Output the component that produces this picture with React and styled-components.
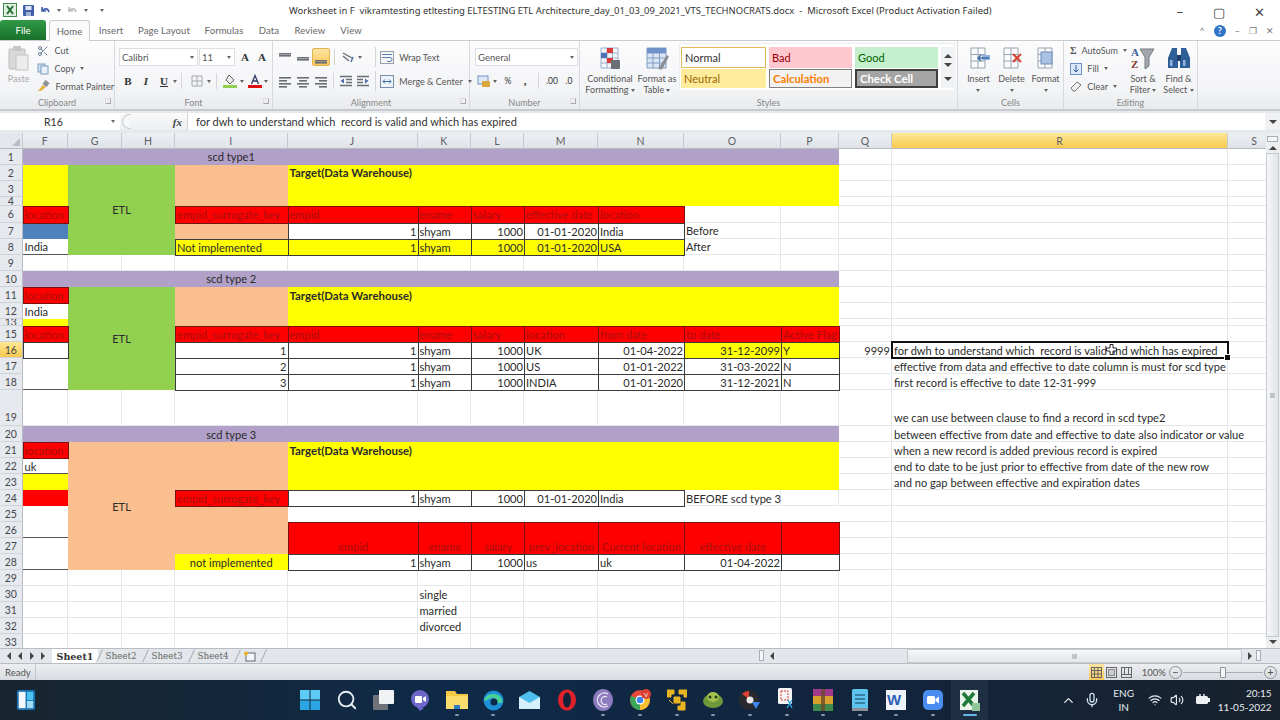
import React from "react";
import styled, { createGlobalStyle } from "styled-components";
import { Scissors, Search, ChevronUp, Mic, Wifi, Volume2 } from "lucide-react";

const FONT = `Lato, "Open Sans", "Liberation Sans", sans-serif`;

const GlobalStyle = createGlobalStyle`
  html, body { margin: 0; padding: 0; width: 1280px; height: 720px; overflow: hidden; background: #fff; }
  body { font-family: ${FONT}; color: #333; }
  * { box-sizing: border-box; }
`;

const Window = styled.div`
  width: 1280px;
  height: 720px;
  display: flex;
  flex-direction: column;
  overflow: hidden;
`;

/* title bar */
const TitleBar = styled.div`
  height: 20px;
  display: flex;
  align-items: center;
  background: #fff;
  padding-left: 3px;
`;
const Quick = styled.div`
  width: 286px;
  display: flex;
  align-items: center;
  gap: 6px;
`;
const TitleText = styled.div`
  font-family: "Noto Sans", sans-serif;
  font-size: 9.45px;
  color: #333;
  white-space: pre;
  width: 864px;
`;
const WinBtns = styled.div`
  display: flex;
  align-items: center;
  margin-left: 23px;
  padding-top: 3px;
  gap: 29px;
  font-size: 13px;
  color: #444;
`;

/* tabs */
const TabBar = styled.div`
  height: 21px;
  display: flex;
  align-items: flex-end;
  background: #fff;
  border-bottom: 1px solid #c9ccd0;
`;
const FileTab = styled.div`
  width: 46px;
  height: 20px;
  background: linear-gradient(#2f9a45, #1a6f2c);
  color: #fff;
  border-radius: 3px 3px 0 0;
  font-size: 9.5px;
  display: flex;
  align-items: center;
  justify-content: center;
  margin-right: 3px;
`;
const Tab = styled.div`
  height: ${(p) => (p.$on ? 21 : 19)}px;
  width: ${(p) => p.$w}px;
  font-size: 9.5px;
  letter-spacing: 0.1px;
  color: #666;
  display: flex;
  align-items: center;
  justify-content: center;
  background: ${(p) => (p.$on ? "#fbfbfb" : "transparent")};
  border: ${(p) => (p.$on ? "1px solid #c9ccd0" : "none")};
  border-bottom: none;
  border-radius: 3px 3px 0 0;
  margin-bottom: ${(p) => (p.$on ? -1 : 0)}px;
`;
const HelpBtns = styled.div`
  margin-left: auto;
  padding-right: 6px;
  height: 19px;
  display: flex;
  align-items: center;
  gap: 9px;
  color: #777;
  font-size: 9px;
`;
const HelpDot = styled.span`
  width: 12px;
  height: 12px;
  border-radius: 50%;
  background: #2f74c6;
  color: #fff;
  font-size: 9px;
  font-weight: 700;
  display: flex;
  align-items: center;
  justify-content: center;
`;

/* ribbon */
const Ribbon = styled.div`
  height: 70px;
  display: flex;
  background: linear-gradient(#fcfcfd, #f3f4f6 70%, #e9ebee);
  border-bottom: 2px solid #c6c9cd;
`;
const Group = styled.div`
  width: ${(p) => p.$w}px;
  border-right: 1px solid #d7d9dc;
  display: flex;
  flex-direction: column;
`;
const GroupBody = styled.div`
  height: 54px;
  display: flex;
  padding-left: ${(p) => p.$pl || 0}px;
`;
const GroupLabel = styled.div`
  flex: 1;
  font-size: 9px;
  color: #888;
  display: flex;
  align-items: center;
  justify-content: center;
  position: relative;
`;
const Launcher = styled.span`
  position: absolute;
  right: 3px;
  top: 3px;
  width: 6px;
  height: 6px;
  border: 1px solid #aaa;
  border-top-color: #ddd;
  border-left-color: #ddd;
`;
const PasteBox = styled.div`
  width: 38px;
  display: flex;
  flex-direction: column;
  align-items: center;
  padding-top: 4px;
  font-size: 9px;
  color: #aaa;
  gap: 2px;
`;
const SmallCol = styled.div`
  width: ${(p) => (p.$w ? p.$w + "px" : "auto")};
  display: flex;
  flex-direction: column;
  padding-top: 1px;
`;
const SmallRow = styled.div`
  height: 18px;
  display: flex;
  align-items: center;
  gap: 3px;
  font-size: 9px;
  color: #555;
  white-space: pre;
`;
const ToolRows = styled.div`
  display: flex;
  flex-direction: column;
  padding-top: 4px;
`;
const ToolRow = styled.div`
  height: 24px;
  display: flex;
  align-items: center;
`;
const Select = styled.div`
  width: ${(p) => p.$w}px;
  height: 18px;
  background: #fff;
  border: 1px solid #dcdee1;
  margin-right: ${(p) => p.$mr || 0}px;
  font-size: 9.5px;
  color: #555;
  display: flex;
  align-items: center;
  justify-content: space-between;
  padding: 0 3px 0 2px;
`;
const Caret = styled.span`
  display: inline-block;
  vertical-align: middle;
  width: 0;
  height: 0;
  border-left: 2px solid transparent;
  border-right: 2px solid transparent;
  border-top: 3px solid #666;
  flex: none;
  margin: 0 ${(p) => p.$m || 0}px;
`;
const Tool = styled.div`
  width: 18px;
  height: 18px;
  margin-left: ${(p) => p.$ml || 0}px;
  display: flex;
  align-items: center;
  justify-content: center;
  border-radius: 2px;
  font-size: ${(p) => (p.$plain ? 8.5 : 11)}px;
  font-family: ${(p) => (p.$plain ? FONT : `"Liberation Serif", serif`)};
  font-weight: ${(p) => (p.$plain ? 400 : 700)};
  font-style: ${(p) => (p.$it ? "italic" : "normal")};
  text-decoration: ${(p) => (p.$un ? "underline" : "none")};
  color: #333;
  background: ${(p) => (p.$on ? "linear-gradient(#fde6a3, #f9c75a)" : "transparent")};
  border: ${(p) => (p.$on ? "1px solid #e3b34c" : "none")};
`;
const VLine = styled.span`
  width: 1px;
  height: ${(p) => p.$h || 16}px;
  background: #d3d5d8;
  flex: none;
  margin: ${(p) => p.$m || "0 4px"};
`;
const BigBtn = styled.div`
  width: ${(p) => p.$w}px;
  display: flex;
  flex-direction: column;
  align-items: center;
  padding-top: 2px;
`;
const BigIcon = styled.div`
  height: 30px;
  display: flex;
  align-items: center;
`;
const BigLabel = styled.div`
  font-size: 9px;
  line-height: 11px;
  color: #555;
  text-align: center;
  white-space: pre;
`;
const SumSign = styled.b`
  font-family: "Liberation Serif", serif;
  font-size: 10px;
  width: 12px;
  text-align: center;
`;
const Gallery = styled.div`
  width: 276px;
  height: 48px;
  margin: 2px 0 0 0;
  background: #fff;
  display: grid;
  grid-template-columns: 85px 83px 83px 14px;
  grid-template-rows: 21px 19px;
  column-gap: 3px;
  row-gap: 1px;
  padding: 3px 1px;
  border: 1px solid #eceef0;
`;
const Style = styled.div`
  font-size: ${(p) => (p.$b ? 11.3 : 11)}px;
  font-weight: ${(p) => (p.$b ? 700 : 400)};
  color: ${(p) => p.$c};
  background: ${(p) => p.$bg};
  border: ${(p) => p.$bd || "none"};
  display: flex;
  align-items: center;
  padding-left: 3px;
`;
const GalleryArrows = styled.div`
  grid-column: 4;
  grid-row: 1 / 3;
  background: #f1f2f4;
  display: flex;
  flex-direction: column;
  align-items: center;
  justify-content: space-around;
`;

/* formula bar */
const FormulaWrap = styled.div`
  height: 22px;
  background: #e6e8eb;
  padding: 2px 0 3px;
  display: flex;
  align-items: stretch;
`;
const NameBox = styled.div`
  width: 120px;
  background: #fff;
  font-size: 10.5px;
  color: #333;
  display: flex;
  align-items: center;
  padding-left: 44px;
  justify-content: space-between;
  padding-right: 4px;
`;
const FxZone = styled.div`
  width: 68px;
  background: linear-gradient(#fafafa, #eceef0);
  display: flex;
  align-items: center;
  justify-content: space-between;
  padding: 0 5px 0 2px;
  font-family: "Liberation Serif", serif;
  font-style: italic;
  font-weight: 700;
  font-size: 11px;
  color: #444;
  border-right: 1px solid #cfd2d6;
`;
const FxCurve = styled.span`
  width: 9px;
  height: 15px;
  border: 1px solid #c9ccd1;
  border-right: none;
  border-radius: 8px 0 0 8px;
  background: #f6f7f8;
`;
const FormulaInput = styled.div`
  flex: 1;
  background: #fff;
  font-size: 11px;
  color: #333;
  display: flex;
  align-items: center;
  padding-left: 8px;
  white-space: pre;
`;
const FormulaEnd = styled.div`
  width: 15px;
  background: #f0f1f3;
  display: flex;
  align-items: center;
  justify-content: center;
`;

/* sheet */
const COLS = ["F", "G", "H", "I", "J", "K", "L", "M", "N", "O", "P", "Q", "R", "S"];
const COL_W = [45.5, 54, 53, 112.5, 130, 53.5, 53, 74, 86, 97, 58, 53, 336, 53];
const ROWS = [1, 2, 3, 4, 6, 7, 8, 9, 10, 11, 12, 13, 15, 16, 17, 18, 19, 20, 21, 22, 23, 24, 25, 26, 27, 28, 29, 30, 31, 32, 33];
const rowH = (r) => (r === 4 ? 9 : r === 6 ? 17 : r === 13 ? 7 : r === 19 ? 36 : 16);

const SheetRow = styled.div`
  height: 515px;
  display: flex;
`;
const Grid = styled.div`
  width: 1265.5px;
  height: 515px;
  overflow: hidden;
  flex: none;
  display: grid;
  grid-template-columns: 22.5px ${COL_W.map((w) => w + "px").join(" ")};
  grid-template-rows: 16px ${ROWS.map((r) => rowH(r) + "px").join(" ")};
  font-size: 11.1px;
  color: #2b2b2b;
`;
const ColHead = styled.div`
  grid-row: 1;
  grid-column: ${(p) => p.$i + 2};
  background: ${(p) => (p.$on ? "linear-gradient(#fde995, #f8c94f)" : "linear-gradient(#edf0f3, #dfe3e8)")};
  border-right: 1px solid #c6cad0;
  border-bottom: 1px solid #b8bcc2;
  font-size: 10.5px;
  color: #5d6066;
  display: flex;
  align-items: center;
  justify-content: center;
`;
const Corner = styled.div`
  grid-row: 1;
  grid-column: 1;
  background: #e4e7eb;
  border-right: 1px solid #c6cad0;
  border-bottom: 1px solid #b8bcc2;
  position: relative;
  &::after {
    content: "";
    position: absolute;
    right: 2px;
    bottom: 2px;
    border-left: 8px solid transparent;
    border-bottom: 8px solid #b9bdc3;
  }
`;
const RowHead = styled.div`
  grid-column: 1;
  grid-row: ${(p) => p.$i + 2};
  background: ${(p) => (p.$on ? "linear-gradient(#fde995, #f8c94f)" : "#e6e9ed")};
  border-right: 1px solid #b8bcc2;
  border-bottom: 1px solid #cfd2d7;
  font-size: 10.5px;
  color: #44474c;
  overflow: hidden;
  display: flex;
  align-items: ${(p) => (p.$tall ? "flex-end" : "center")};
  justify-content: center;
  line-height: 16px;
`;
const GridLine = styled.div`
  grid-column: ${(p) => p.$c};
  grid-row: ${(p) => p.$r};
  border-right: 1px solid #e6e7e9;
  border-bottom: 1px solid #e6e7e9;
`;
const Cell = styled.div`
  grid-column: ${(p) => p.$col};
  grid-row: ${(p) => p.$row};
  background: ${(p) => p.$fill || "transparent"};
  color: ${(p) => (p.$head ? "#a80f0f" : "#2b2b2b")};
  font-weight: ${(p) => (p.$bold ? 700 : 400)};
  font-size: ${(p) => (p.$bold ? "11.4px" : "inherit")};
  display: flex;
  align-items: ${(p) => p.$v || "center"};
  justify-content: ${(p) => (p.$a === "r" ? "flex-end" : p.$a === "c" ? "center" : "flex-start")};
  padding: ${(p) => (p.$nudge ? 1 : 0)}px 2px 0 2px;
  line-height: 16px;
  white-space: pre;
  position: relative;
  ${(p) =>
    p.$box &&
    `margin: 0 -1px -1px 0; outline: 1px solid ${p.$head ? "#7a1010" : "#3a3a3a"}; outline-offset: -1px;`}
  ${(p) => p.$under && `box-shadow: inset 0 -1px 0 #555;`}
`;
const Selected = styled(Cell)`
  outline: 2px solid #111;
  outline-offset: -1px;
  z-index: 2;
  &::after {
    content: "";
    position: absolute;
    right: -3px;
    bottom: -3px;
    width: 5px;
    height: 5px;
    background: #111;
    border: 1px solid #fff;
  }
`;
const Pointer = styled.svg`
  position: absolute;
  left: 214px;
  top: 2px;
`;
const VScroll = styled.div`
  flex: 1;
  background: #eceef0;
  display: flex;
  flex-direction: column;
  align-items: center;
`;
const SplitBox = styled.div`
  width: 11px;
  height: 6px;
  margin-top: 3px;
  background: #f4f5f6;
  border: 1px solid #a9adb3;
`;
const ScrollThumb = styled.div`
  width: 13px;
  flex: 1;
  margin: 3px 0;
  background: linear-gradient(90deg, #f6f7f8, #e2e4e8);
  border: 1px solid #c6c9ce;
  display: flex;
  align-items: center;
  justify-content: center;
`;
const Grip = styled.span`
  width: 5px;
  height: 5px;
  background: #c0c3c8;
`;
const Arrow = styled.span`
  width: 0;
  height: 0;
  flex: none;
  ${(p) => p.$d === "u" && "border-left:4px solid transparent;border-right:4px solid transparent;border-bottom:4px solid #444;margin-top:4px;"}
  ${(p) => p.$d === "d" && `border-left:4px solid transparent;border-right:4px solid transparent;border-top:4px solid #444;margin-bottom:${p.$flush ? 0 : 4}px;`}
  ${(p) => p.$d === "l" && "border-top:4px solid transparent;border-bottom:4px solid transparent;border-right:4px solid #444;"}
  ${(p) => p.$d === "r" && "border-top:4px solid transparent;border-bottom:4px solid transparent;border-left:4px solid #444;"}
`;

/* sheet tabs */
const TabsRow = styled.div`
  height: 15px;
  display: flex;
  align-items: stretch;
  background: #e3e6ea;
  border-top: 1px solid #b9bdc3;
`;
const SheetNav = styled.div`
  width: 52px;
  display: flex;
  align-items: center;
  justify-content: space-around;
  padding: 0 3px;
`;
const SheetTab = styled.div`
  width: ${(p) => p.$w}px;
  font-family: "DejaVu Serif", serif;
  font-size: ${(p) => (p.$on ? 9.5 : 8.8)}px;
  font-weight: ${(p) => (p.$on ? 700 : 400)};
  color: ${(p) => (p.$on ? "#333" : "#666")};
  background: ${(p) => (p.$on ? "#fff" : "transparent")};
  display: flex;
  align-items: center;
  justify-content: center;
  position: relative;
  &::after {
    content: "";
    position: absolute;
    right: -2px;
    top: 0;
    bottom: 0;
    width: 1px;
    background: #a5a9af;
    transform: rotate(25deg);
  }
`;
const SplitH = styled.span`
  width: 5px;
  height: 11px;
  margin: 1px 0 0 ${(p) => p.$ml}px;
  background: #f5f6f7;
  border: 1px solid #a9adb3;
  flex: none;
`;
const HThumb = styled.div`
  width: 335px;
  margin: 0 3px 0 ${(p) => p.$ml}px;
  background: linear-gradient(#f6f7f8, #e4e6ea);
  border: 1px solid #c6c9ce;
  display: flex;
  align-items: center;
  justify-content: center;
`;
const ArrowSlot = styled.div`
  display: flex;
  align-items: center;
  margin-left: ${(p) => p.$ml || 0}px;
`;

/* status bar */
const StatusBar = styled.div`
  height: 17px;
  display: flex;
  align-items: center;
  background: linear-gradient(#eceef1, #d8dbe0);
  border-top: 1px solid #b9bdc3;
  font-size: 9.5px;
  color: #555;
`;
const Ready = styled.div`
  width: 36px;
  height: 100%;
  padding-left: 5px;
  display: flex;
  align-items: center;
  border-right: 1px solid #c2c5ca;
`;
const StatusRight = styled.div`
  margin-left: auto;
  height: 100%;
  padding-right: 3px;
  display: flex;
  align-items: center;
`;
const ViewBtn = styled.div`
  width: 15px;
  height: 100%;
  display: flex;
  align-items: center;
  justify-content: center;
  background: ${(p) => (p.$on ? "linear-gradient(#fde6a3, #f9c75a)" : "transparent")};
`;
const ZoomPct = styled.span`
  margin: 0 3px 0 8px;
`;
const ZoomDot = styled.span`
  width: 13px;
  height: 13px;
  border: 1px solid #8d9197;
  border-radius: 50%;
  font-size: 11px;
  line-height: 10px;
  display: flex;
  align-items: center;
  justify-content: center;
  color: #555;
  flex: none;
`;
const ZoomTrack = styled.div`
  width: 80px;
  height: 1px;
  background: #a9adb3;
  margin: 0 1px;
  display: flex;
  align-items: center;
  justify-content: center;
`;
const ZoomKnob = styled.span`
  width: 6px;
  height: 11px;
  background: #f5f6f7;
  border: 1px solid #8d9197;
  border-radius: 1px;
`;

/* taskbar */
const Taskbar = styled.div`
  height: 40px;
  display: flex;
  align-items: center;
  background: linear-gradient(90deg, #18252f, #0f2a48 35%, #12243c 70%, #18222d);
  color: #e8ecf0;
`;
const TaskLeft = styled.div`
  width: 291.67px;
  flex: none;
  padding-left: 16px;
  display: flex;
  align-items: center;
`;
const TaskSlot = styled.div`
  width: 36.67px;
  flex: none;
  height: 40px;
  display: flex;
  align-items: center;
  justify-content: center;
  position: relative;
  background: ${(p) => (p.$active ? "rgba(255,255,255,0.05)" : "transparent")};
  ${(p) =>
    p.$run &&
    `&::after {
      content: "";
      position: absolute;
      bottom: 4px;
      left: 50%;
      width: ${p.$active ? 14 : 4}px;
      margin-left: ${p.$active ? -7 : -2}px;
      height: 2px;
      border-radius: 1px;
      background: ${p.$active ? "#63b8ee" : "#8a94a0"};
    }`}
`;
const Tray = styled.div`
  margin-left: 73px;
  display: flex;
  align-items: center;
  height: 40px;
  flex: none;
`;
const TrayIcon = styled.span`
  display: flex;
  margin-right: ${(p) => p.$mr || 0}px;
`;
const Lang = styled.div`
  width: 38px;
  margin: 0 5px 0 4.5px;
  font-size: 10px;
  line-height: 14px;
  text-align: center;
`;
const Clock = styled.div`
  width: 62px;
  font-size: 10px;
  line-height: 14px;
  text-align: right;
  white-space: nowrap;
`;

const Lines = ({ kind }) => {
  const rows = {
    top: [[2, 12], [4, 12]],
    mid: [[6, 12], [8, 12]],
    bot: [[9, 12], [11, 12]],
    left: [[2, 12], [5, 8], [8, 12], [11, 8]],
    center: [[2, 12], [5, 8], [8, 12], [11, 8]],
    right: [[2, 12], [5, 8], [8, 12], [11, 8]],
  }[kind];
  return (
    <svg width="14" height="13" viewBox="0 0 14 13">
      {rows.map(([y, w], i) => (
        <rect key={i} x={kind === "right" ? 13 - w : kind === "center" ? 7 - w / 2 : 1} y={y} width={w} height="1.6" fill="#6b6f75" />
      ))}
    </svg>
  );
};

const XlLogo = () => (
  <svg width="14" height="14" viewBox="0 0 14 14">
    <rect x="0.5" y="0.5" width="13" height="13" fill="#dfeee0" stroke="#3f8a4c" />
    <path d="M4 3l6 8M10 3l-6 8" stroke="#1f6f30" strokeWidth="2" />
  </svg>
);
const Save = () => (
  <svg width="11" height="11" viewBox="0 0 11 11">
    <rect width="11" height="11" rx="1" fill="#3f5fa8" />
    <rect x="2.5" y="1" width="6" height="4" fill="#dfe6f2" />
    <rect x="3" y="7" width="5" height="4" fill="#9fb1d4" />
  </svg>
);
const Undo = ({ c = "#3f5fa8" }) => (
  <svg width="11" height="11" viewBox="0 0 11 11">
    <path d="M2 2v4h4M2 6c2-3 6-3 7 1" fill="none" stroke={c} strokeWidth="1.6" />
  </svg>
);
const Paste = () => (
  <svg width="22" height="26" viewBox="0 0 22 26">
    <rect x="1" y="4" width="16" height="20" rx="1" fill="#d8d8d8" stroke="#bdbdbd" />
    <rect x="5" y="1" width="8" height="5" rx="1" fill="#c6c6c6" />
    <rect x="8" y="10" width="12" height="15" fill="#ececec" stroke="#c4c4c4" />
  </svg>
);
const CopyIc = () => (
  <svg width="12" height="12" viewBox="0 0 12 12">
    <rect x="1" y="1" width="7" height="8" fill="#cfe0f2" stroke="#7d9cc0" />
    <rect x="4" y="3" width="7" height="8" fill="#e9f1fa" stroke="#7d9cc0" />
  </svg>
);
const Painter = () => (
  <svg width="13" height="12" viewBox="0 0 13 12">
    <path d="M1 11l5-6 3 2-5 4z" fill="#e2b23c" />
    <rect x="6.5" y="1" width="5" height="5" transform="rotate(35 9 3.5)" fill="#8b8f96" />
  </svg>
);
const Borders = () => (
  <svg width="12" height="12" viewBox="0 0 12 12">
    <path d="M1 1h10v10H1zM6 1v10M1 6h10" fill="none" stroke="#a5a8ad" />
  </svg>
);
const FillColor = () => (
  <svg width="14" height="14" viewBox="0 0 14 14">
    <path d="M6 1l5 5-4 4-4-4z" fill="#e9eaec" stroke="#666" />
    <rect x="0" y="11" width="14" height="3" fill="#92d050" />
  </svg>
);
const FontColor = () => (
  <svg width="14" height="14" viewBox="0 0 14 14">
    <path d="M3.5 10L7 1.500 10.500 10M5 7h4" fill="none" stroke="#333a66" strokeWidth="1.3" />
    <rect x="0" y="11" width="14" height="3" fill="#e01010" />
  </svg>
);
const Orient = () => (
  <svg width="14" height="13" viewBox="0 0 14 13">
    <path d="M2 2l9 5M2 5l6 5" stroke="#6b6f75" strokeWidth="1.4" />
    <path d="M10 11l2-5" stroke="#4f6fa8" strokeWidth="1.4" />
  </svg>
);
const Accounting = () => (
  <svg width="14" height="13" viewBox="0 0 14 13">
    <rect x="1" y="1" width="10" height="8" fill="#dfe9f5" stroke="#6f93c9" />
    <rect x="5" y="6" width="8" height="6" rx="1" fill="#d9a93a" />
  </svg>
);
const Indent = ({ flip }) => (
  <svg width="14" height="12" viewBox="0 0 14 12">
    <g transform={flip ? "translate(14,0) scale(-1,1)" : undefined}>
      <path d="M1 1.500h12M7 4.500h6M7 7.500h6M1 10.500h12" stroke="#6b6f75" strokeWidth="1.3" />
      <path d="M5 3.500L1.500 6 5 8.500z" fill="#4f6fa8" />
    </g>
  </svg>
);
const WrapIc = () => (
  <svg width="14" height="13" viewBox="0 0 14 13">
    <rect x="0.5" y="0.5" width="13" height="12" fill="#f5f5f5" stroke="#9a9da2" />
    <path d="M2 3.500h10M2 6.500h8a2 2 0 010 4H7" fill="none" stroke="#5a7fb0" />
  </svg>
);
const MergeIc = () => (
  <svg width="14" height="13" viewBox="0 0 14 13">
    <rect x="0.5" y="0.5" width="13" height="12" fill="#eef3f9" stroke="#7b8ea8" />
    <path d="M3 6.500h8M3 6.500l2-2M3 6.500l2 2M11 6.500l-2-2M11 6.500l-2 2" stroke="#3f6ea8" fill="none" />
  </svg>
);
const Cond = () => (
  <svg width="26" height="26" viewBox="0 0 26 26">
    <path d="M4 3h17v20H4zM4 8h17M4 13h17M4 18h17M10 3v20M15.500 3v20" fill="#f4f6f9" stroke="#9ab0cc" />
    <rect x="10" y="3" width="6" height="5" fill="#d83a3a" />
    <rect x="4" y="8" width="6" height="5" fill="#4d72b8" />
    <rect x="10" y="13" width="6" height="5" fill="#d83a3a" />
    <rect x="14" y="15" width="9" height="9" rx="1" fill="#6b6f75" />
  </svg>
);
const TableIc = () => (
  <svg width="26" height="26" viewBox="0 0 26 26">
    <path d="M3 3h19v20H3zM3 8h19M3 13h19M3 18h19M9 3v20M15.500 3v20" fill="#dbe6f4" stroke="#7f9cc4" />
    <rect x="3" y="3" width="19" height="5" fill="#6f93c9" />
    <path d="M14 24l9-14 2 1.500-7 13z" fill="#8a8d92" />
  </svg>
);
const CellsIc = ({ kind }) => (
  <svg width="24" height="26" viewBox="0 0 24 26">
    <path d="M4 3h14v20H4zM4 9.500h14M4 16h14M11 3v20" fill="#fafbfc" stroke="#9aa3ae" />
    {kind === "insert" && <rect x="15" y="10" width="8" height="5" fill="#8fb2de" />}
    {kind === "insert" && <path d="M11 13h11M14 10l-3 3 3 3" stroke="#3f6ea8" fill="none" strokeWidth="1.500" />}
    {kind === "delete" && <path d="M13 9l8 8M21 9l-8 8" stroke="#d8412f" strokeWidth="2" />}
    {kind === "format" && <rect x="7" y="7" width="11" height="12" fill="#a9c3e4" stroke="#6b8bb8" />}
  </svg>
);
const SortIc = () => (
  <svg width="28" height="26" viewBox="0 0 28 26">
    <text x="2" y="11" fontSize="11" fontWeight="700" fontFamily="Liberation Serif" fill="#3a5f9a">A</text>
    <text x="2" y="23" fontSize="11" fontWeight="700" fontFamily="Liberation Serif" fill="#8a3a2a">Z</text>
    <path d="M11 4h14l-5 8v9l-4 3V12z" fill="#a3a7ad" stroke="#777b82" />
  </svg>
);
const Binoc = () => (
  <svg width="26" height="26" viewBox="0 0 26 26">
    <path d="M6 3h5v6l1 3v11H2V13zM15 3h5l4 10v10H14V12l1-3z" fill="#2f5f96" />
    <rect x="11" y="10" width="4" height="6" fill="#1f3f6a" />
    <rect x="4" y="15" width="2.500" height="6" fill="#8fb2de" />
    <rect x="17" y="15" width="2.500" height="6" fill="#8fb2de" />
  </svg>
);
const Eraser = () => (
  <svg width="12" height="12" viewBox="0 0 12 12">
    <path d="M1 8l6-6 4 3-6 6H3z" fill="#f0f0f0" stroke="#777" />
  </svg>
);
const FillDown = () => (
  <svg width="12" height="12" viewBox="0 0 12 12">
    <rect x="0.5" y="0.5" width="11" height="11" fill="#dbe8f7" stroke="#6f93c9" />
    <path d="M6 2v7M3.500 6.500L6 9l2.500-2.500" stroke="#2f5f96" fill="none" />
  </svg>
);
const ViewIc = ({ kind }) => (
  <svg width="11" height="11" viewBox="0 0 11 11">
    <rect x="0.5" y="0.5" width="10" height="10" fill="none" stroke="#666" />
    {kind === "n" && <path d="M0.500 3.500h10M0.500 7h10M3.500 0.500v10M7 0.500v10" stroke="#666" />}
    {kind === "p" && <rect x="2.500" y="2.500" width="6" height="6" fill="#ccc" stroke="#888" />}
    {kind === "b" && <path d="M3.500 0.500v7h4v-7M0.500 7.500h10" fill="none" stroke="#666" />}
  </svg>
);

const Widgets = () => (
  <svg width="20" height="20" viewBox="0 0 20 22">
    <rect width="20" height="22" rx="2" fill="#1a6fb0" />
    <rect x="2" y="2" width="7.500" height="18" fill="#f2f8fd" />
    <rect x="11" y="2" width="7" height="9" fill="#4cc2f1" />
    <rect x="11" y="12" width="7" height="8" fill="#9fdcf7" />
  </svg>
);
const Win11 = () => (
  <svg width="20" height="20" viewBox="0 0 20 20">
    <rect width="9.500" height="9.500" fill="#5ccbf5" />
    <rect x="10.500" width="9.500" height="9.500" fill="#5ccbf5" />
    <rect y="10.500" width="9.500" height="9.500" fill="#2ba6e2" />
    <rect x="10.500" y="10.500" width="9.500" height="9.500" fill="#2ba6e2" />
  </svg>
);
const TaskView = () => (
  <svg width="21" height="20" viewBox="0 0 21 20">
    <rect y="5" width="15" height="15" rx="1" fill="#6d7378" />
    <rect x="6" width="15" height="14" rx="1" fill="#f1f2f3" />
  </svg>
);
const Chat = () => (
  <svg width="20" height="22" viewBox="0 0 20 22">
    <circle cx="10" cy="10" r="9" fill="#6d67c9" />
    <path d="M6 17l8 2-4 3z" fill="#6d67c9" />
    <rect x="5" y="7" width="7" height="7" rx="1" fill="#fff" />
    <path d="M13 9l3-2v6l-3-2z" fill="#fff" />
  </svg>
);
const Folder = () => (
  <svg width="22" height="20" viewBox="0 0 22 20">
    <path d="M0 1h9l2 3h11v15H0z" fill="#f6c944" />
    <rect y="6" width="22" height="13" fill="#fbdc6c" />
    <rect x="8" y="15" width="6" height="4" fill="#2f7bc4" />
  </svg>
);
const Edge = () => (
  <svg width="21" height="21" viewBox="0 0 21 21">
    <circle cx="10.500" cy="10.500" r="10" fill="#1c8fd6" />
    <path d="M1 11C2 5 9 2 15 5c4 2 5 6 4 8h-7c2-3-1-6-4-5-3 1-5 3-7 3z" fill="#49d09a" />
    <circle cx="11" cy="12" r="3.500" fill="#0f2a48" />
  </svg>
);
const Mail = () => (
  <svg width="21" height="18" viewBox="0 0 21 18">
    <path d="M0 6L10.500 0 21 6v12H0z" fill="#4fc0ee" />
    <path d="M0 6l10.500 6L21 6v12H0z" fill="#e6f6fd" opacity="0.9" />
  </svg>
);
const Opera = () => (
  <svg width="20" height="22" viewBox="0 0 20 22">
    <ellipse cx="10" cy="11" rx="9" ry="10.500" fill="#e0202a" />
    <ellipse cx="10" cy="11" rx="4" ry="7.500" fill="#12243c" />
  </svg>
);
const Tor = () => (
  <svg width="20" height="22" viewBox="0 0 20 22">
    <ellipse cx="10" cy="11" rx="10" ry="11" fill="#8d7cc0" />
    <path d="M15 5a7 7 0 100 12M14 8a4 4 0 100 7" fill="none" stroke="#e8e4f4" strokeWidth="1.300" />
  </svg>
);
const Chrome = () => (
  <svg width="22" height="22" viewBox="0 0 22 22">
    <circle cx="11" cy="11" r="10" fill="#e6493a" />
    <path d="M2 7a10 10 0 009 14l5-9z" fill="#3aa757" />
    <path d="M11 21a10 10 0 009-14h-9z" fill="#f6c02f" />
    <circle cx="11" cy="11" r="4.500" fill="#fff" />
    <circle cx="11" cy="11" r="3.300" fill="#3f86ee" />
    <circle cx="17" cy="5" r="5" fill="#d8412f" />
    <text x="15" y="7.500" fontSize="6" fill="#fff">V</text>
  </svg>
);
const Yellow = () => (
  <svg width="20" height="22" viewBox="0 0 20 22">
    <path d="M0 1h7v4H4v3H0zM12 1h8v7h-3V5h-5zM7 8h6v6H7zM14 13h4v8h-7v-4h3zM2 11l4 4" fill="#e9b422" stroke="#e9b422" />
  </svg>
);
const GreenApp = () => (
  <svg width="22" height="20" viewBox="0 0 22 20">
    <ellipse cx="11" cy="11" rx="10" ry="7" fill="#6f9a3c" />
    <ellipse cx="11" cy="7" rx="6" ry="5" fill="#a5c24e" />
    <circle cx="8" cy="7" r="1.500" fill="#23421a" />
    <circle cx="14" cy="7" r="1.500" fill="#23421a" />
  </svg>
);
const Disc = () => (
  <svg width="24" height="24" viewBox="0 0 24 24">
    <circle cx="11" cy="12" r="10" fill="#2a2a2e" />
    <path d="M4 6a9 9 0 017-3v8z" fill="#d8412f" />
    <circle cx="12" cy="12" r="3.500" fill="#e8e8e8" />
    <path d="M14 14h8l-4 7z" fill="#3f86ee" />
  </svg>
);
const Snip = () => (
  <svg width="22" height="24" viewBox="0 0 22 24">
    <rect x="2" y="0" width="14" height="16" rx="1.500" fill="#f6f6f8" />
    <rect x="5" y="3" width="7" height="9" fill="none" stroke="#d8412f" strokeDasharray="2 1" />
    <path d="M16 12l-5 8M12 12l4 8" stroke="#2ba6e2" strokeWidth="1.300" />
  </svg>
);
const Rar = () => (
  <svg width="20" height="22" viewBox="0 0 20 22">
    <rect width="20" height="7" fill="#a23a8c" />
    <rect y="7" width="20" height="8" fill="#d8a02c" />
    <rect y="15" width="20" height="7" fill="#3f8a4c" />
    <rect x="8" width="4" height="22" fill="#6d4a2a" opacity="0.8" />
  </svg>
);
const Notepad = () => (
  <svg width="16" height="22" viewBox="0 0 16 22">
    <rect width="16" height="22" rx="1.500" fill="#5cc4ee" />
    <path d="M3 6h10M3 10h10M3 14h10" stroke="#0f3a58" strokeWidth="1.200" />
    <rect y="19" width="16" height="3" fill="#8b8f96" />
  </svg>
);
const Word = () => (
  <svg width="20" height="20" viewBox="0 0 20 20">
    <rect width="20" height="20" fill="#eef3fa" />
    <text x="1" y="15" fontSize="15" fontWeight="700" fontFamily="Liberation Sans" fill="#2b5fb4">W</text>
  </svg>
);
const ZoomApp = () => (
  <svg width="20" height="20" viewBox="0 0 20 20">
    <rect width="20" height="20" rx="5" fill="#4a8cf0" />
    <rect x="4" y="6" width="8" height="8" rx="1.500" fill="#fff" />
    <path d="M12.500 9l3.500-2.500v7L12.500 11z" fill="#fff" />
  </svg>
);
const ExcelApp = () => (
  <svg width="20" height="21" viewBox="0 0 20 21">
    <rect width="18" height="20" fill="#e9f3ea" />
    <path d="M3 3l11 13M14 3L3 16" stroke="#1f7a3a" strokeWidth="3.500" />
    <rect x="12" y="13" width="8" height="8" fill="#8fc79a" />
  </svg>
);
const Battery = () => (
  <svg width="14" height="12" viewBox="0 0 14 12">
    <rect x="0" y="2" width="12" height="8" rx="1.500" fill="#eef0f2" />
    <rect x="12" y="4" width="2" height="4" fill="#eef0f2" />
    <path d="M4 0v4M8 0v4" stroke="#eef0f2" strokeWidth="1.500" />
  </svg>
);

const place = (at) => {
  const [a, b = a] = at.split(":");
  const parse = (s) => [COLS.indexOf(s[0]) + 2, ROWS.indexOf(Number(s.slice(1))) + 2];
  const [c1, r1] = parse(a);
  const [c2, r2] = parse(b);
  return { $col: `${c1} / ${c2 + 1}`, $row: `${r1} / ${r2 + 1}`, $nudge: Number(a.slice(1)) >= 11 };
};

const PURPLE = "#b1a0c7";
const YEL = "#ffff00";
const RED = "#ff0000";
const GREEN = "#92d050";
const PEACH = "#fabf8f";
const BLUE = "#4f81bd";
const WHITE = "#fff";

const redRow = (row, items) =>
  items.map(([col, text]) => ({ at: `${col}${row}`, fill: RED, text, head: true, box: true }));

const dataRow = (row, cols, fill = WHITE) =>
  cols.map(([col, text, a]) => ({ at: `${col}${row}`, fill, text, a, box: true }));

const redTall = (col, text) => ({ at: `${col}26:${col}27`, fill: RED, text, head: true, box: true, a: "c", v: "flex-end" });

const CELLS = [
  // scd type 1
  { at: "F1:P1", fill: PURPLE },
  { at: "I1", text: "scd type1", a: "c" },
  { at: "F2:F4", fill: YEL },
  { at: "G2:H8", fill: GREEN, text: "ETL", a: "c" },
  { at: "I2:I4", fill: PEACH },
  { at: "J2:P4", fill: YEL },
  { at: "J2", text: "Target(Data Warehouse)", bold: true },
  { at: "F6", fill: RED, text: "location", head: true, box: true },
  ...redRow(6, [["I", "empid_surrogate_key"], ["J", "empid"], ["K", "ename"], ["L", "salary"], ["M", "effective date"], ["N", "location"]]),
  { at: "F7", fill: BLUE },
  { at: "I7", fill: PEACH },
  ...dataRow(7, [["J", "1", "r"], ["K", "shyam"], ["L", "1000", "r"], ["M", "01-01-2020", "r"], ["N", "India"]]),
  { at: "O7", text: "Before" },
  { at: "F8", fill: WHITE, text: "India", under: true },
  ...dataRow(8, [["I", "Not implemented"], ["J", "1", "r"], ["K", "shyam"], ["L", "1000", "r"], ["M", "01-01-2020", "r"], ["N", "USA"]], YEL),
  { at: "O8", text: "After" },
  // scd type 2
  { at: "F10:P10", fill: PURPLE },
  { at: "I10", text: "scd type 2", a: "c" },
  { at: "F11", fill: RED, text: "location", head: true, box: true },
  { at: "G11:H18", fill: GREEN, text: "ETL", a: "c" },
  { at: "I11:I13", fill: PEACH },
  { at: "J11:P13", fill: YEL },
  { at: "J11", text: "Target(Data Warehouse)", bold: true },
  { at: "F12", fill: WHITE, text: "India" },
  { at: "F13", fill: YEL },
  { at: "F15", fill: RED, text: "location", head: true, box: true },
  ...redRow(15, [["I", "empid_surrogate_key"], ["J", "empid"], ["K", "ename"], ["L", "salary"], ["M", "location"], ["N", "from date"], ["O", "to date"], ["P", "Active Flag"]]),
  { at: "F16", fill: WHITE, box: true },
  { at: "F17:F18", fill: WHITE, under: true },
  ...dataRow(16, [["I", "1", "r"], ["J", "1", "r"], ["K", "shyam"], ["L", "1000", "r"], ["M", "UK"], ["N", "01-04-2022", "r"]]),
  ...dataRow(16, [["O", "31-12-2099", "r"], ["P", "Y"]], YEL),
  { at: "Q16", text: "9999", a: "r" },
  ...dataRow(17, [["I", "2", "r"], ["J", "1", "r"], ["K", "shyam"], ["L", "1000", "r"], ["M", "US"], ["N", "01-01-2022", "r"], ["O", "31-03-2022", "r"], ["P", "N"]]),
  ...dataRow(18, [["I", "3", "r"], ["J", "1", "r"], ["K", "shyam"], ["L", "1000", "r"], ["M", "INDIA"], ["N", "01-01-2020", "r"], ["O", "31-12-2021", "r"], ["P", "N"]]),
  // scd type 3
  { at: "F20:P20", fill: PURPLE },
  { at: "I20", text: "scd type 3", a: "c" },
  { at: "F21", fill: RED, text: "location", head: true, box: true },
  { at: "G21:H28", fill: PEACH, text: "ETL", a: "c" },
  { at: "I21:I23", fill: PEACH },
  { at: "I25:I27", fill: PEACH },
  { at: "J21:P23", fill: YEL },
  { at: "J21", text: "Target(Data Warehouse)", bold: true },
  { at: "F22", fill: WHITE, text: "uk", under: true },
  { at: "F23", fill: YEL },
  { at: "F24", fill: RED },
  { at: "I24", fill: RED, text: "empid_surrogate_key", head: true, box: true },
  ...dataRow(24, [["J", "1", "r"], ["K", "shyam"], ["L", "1000", "r"], ["M", "01-01-2020", "r"], ["N", "India"]]),
  { at: "O24", text: "BEFORE scd type 3" },
  { at: "F25:F26", fill: WHITE, under: true },
  { at: "F27:F28", fill: WHITE, under: true },
  { at: "J25:P25", fill: WHITE },
  redTall("J", "empid"),
  redTall("K", "ename"),
  redTall("L", "salary"),
  redTall("M", "prev_location"),
  redTall("N", "Current location"),
  redTall("O", "effective date"),
  redTall("P", ""),
  { at: "I28", fill: YEL, text: "not implemented", a: "c" },
  ...dataRow(28, [["J", "1", "r"], ["K", "shyam"], ["L", "1000", "r"], ["M", "us"], ["N", "uk"], ["O", "01-04-2022", "r"], ["P", ""]]),
  { at: "K30", text: "single" },
  { at: "K31", text: "married" },
  { at: "K32", text: "divorced" },
  // notes
  { at: "R17", text: "effective from data and effective to date column is must for scd type" },
  { at: "R18", text: "first record is effective to date 12-31-999" },
  { at: "R19", text: "we can use between clause to find a record in scd type2", v: "flex-end" },
  { at: "R20", text: "between effective from date and effective to date also indicator or value" },
  { at: "R21", text: "when a new record is added previous record is expired" },
  { at: "R22", text: "end to date to be just prior to effective from date of the new row" },
  { at: "R23", text: "and no gap between effective and expiration dates" },
];

// boxed cells go last so plain fills don't paint over their borders
const ORDERED = [...CELLS].sort((a, b) => (a.box ? 1 : 0) - (b.box ? 1 : 0));

const TAB_W = [["Insert", 42], ["Page Layout", 64], ["Formulas", 56], ["Data", 34], ["Review", 48], ["View", 34]];

export default function App() {
  return (
    <>
      <GlobalStyle />
      <Window>
        <TitleBar>
          <Quick>
            <XlLogo />
            <Save />
            <Undo />
            <Caret />
            <Undo c="#b9bcc2" />
            <Caret />
            <Caret $m={6} />
          </Quick>
          <TitleText>{"Worksheet in F  vikramtesting etltesting ELTESTING ETL Architecture_day_01_03_09_2021_VTS_TECHNOCRATS.docx  -  Microsoft Excel (Product Activation Failed)"}</TitleText>
          <WinBtns>
            <span>−</span>
            <span>▢</span>
            <span>✕</span>
          </WinBtns>
        </TitleBar>

        <TabBar>
          <FileTab>File</FileTab>
          <Tab $on $w={41}>Home</Tab>
          {TAB_W.map(([t, w]) => (
            <Tab key={t} $w={w}>{t}</Tab>
          ))}
          <HelpBtns>
            <span>^</span>
            <HelpDot>?</HelpDot>
            <span>–</span>
            <span>❐</span>
            <span>✕</span>
          </HelpBtns>
        </TabBar>

        <Ribbon>
          <Group $w={115}>
            <GroupBody>
              <PasteBox>
                <Paste />
                <span>Paste</span>
              </PasteBox>
              <SmallCol>
                <SmallRow><Scissors size={12} color="#6d7f98" /> Cut</SmallRow>
                <SmallRow><CopyIc /> Copy <Caret /></SmallRow>
                <SmallRow><Painter /> Format Painter</SmallRow>
              </SmallCol>
            </GroupBody>
            <GroupLabel>Clipboard<Launcher /></GroupLabel>
          </Group>

          <Group $w={158}>
            <GroupBody $pl={4}>
              <ToolRows>
                <ToolRow>
                  <Select $w={79} $mr={1}>Calibri <Caret /></Select>
                  <Select $w={36}>11 <Caret /></Select>
                  <Tool $ml={1}>A</Tool>
                  <Tool $ml={-1}>A</Tool>
                </ToolRow>
                <ToolRow>
                  <Tool>B</Tool>
                  <Tool $it>I</Tool>
                  <Tool $un>U</Tool>
                  <Caret />
                  <VLine />
                  <Tool $ml={2}><Borders /></Tool>
                  <Caret $m={1} />
                  <VLine />
                  <Tool><FillColor /></Tool>
                  <Caret $m={1} />
                  <Tool $ml={1}><FontColor /></Tool>
                  <Caret />
                </ToolRow>
              </ToolRows>
            </GroupBody>
            <GroupLabel>Font<Launcher /></GroupLabel>
          </Group>

          <Group $w={197}>
            <GroupBody $pl={3}>
              <ToolRows>
                <ToolRow>
                  <Tool><Lines kind="top" /></Tool>
                  <Tool><Lines kind="mid" /></Tool>
                  <Tool $on><Lines kind="bot" /></Tool>
                  <VLine $m="0 4px" />
                  <Tool><Orient /></Tool>
                  <Caret $m={1} />
                  <VLine $h={20} $m="0 4px 0 12px" />
                  <SmallRow><WrapIc /> Wrap Text</SmallRow>
                </ToolRow>
                <ToolRow>
                  <Tool><Lines kind="left" /></Tool>
                  <Tool><Lines kind="center" /></Tool>
                  <Tool><Lines kind="right" /></Tool>
                  <VLine $m="0 3px" />
                  <Tool><Indent /></Tool>
                  <Tool $ml={-1}><Indent flip /></Tool>
                  <VLine $h={20} $m="0 4px 0 3px" />
                  <SmallRow><MergeIc /> Merge &amp; Center <Caret /></SmallRow>
                </ToolRow>
              </ToolRows>
            </GroupBody>
            <GroupLabel>Alignment<Launcher /></GroupLabel>
          </Group>

          <Group $w={110}>
            <GroupBody $pl={5}>
              <ToolRows>
                <ToolRow><Select $w={103}>General <Caret /></Select></ToolRow>
                <ToolRow>
                  <Tool><Accounting /></Tool>
                  <Caret />
                  <Tool $ml={2} $plain>%</Tool>
                  <Tool $ml={-1}>,</Tool>
                  <VLine />
                  <Tool $plain>.00</Tool>
                  <Tool $ml={-1} $plain>.0</Tool>
                </ToolRow>
              </ToolRows>
            </GroupBody>
            <GroupLabel>Number<Launcher /></GroupLabel>
          </Group>

          <Group $w={378}>
            <GroupBody $pl={5}>
              <BigBtn $w={50}>
                <BigIcon><Cond /></BigIcon>
                <BigLabel>{"Conditional\nFormatting "}<Caret /></BigLabel>
              </BigBtn>
              <BigBtn $w={44}>
                <BigIcon><TableIc /></BigIcon>
                <BigLabel>{"Format as\nTable "}<Caret /></BigLabel>
              </BigBtn>
              <Gallery>
                <Style $c="#333" $bg="#fff" $bd="1px solid #e2b95a">Normal</Style>
                <Style $c="#9c0006" $bg="#ffc7ce">Bad</Style>
                <Style $c="#006100" $bg="#c6efce">Good</Style>
                <GalleryArrows>
                  <Arrow $d="u" />
                  <Arrow $d="d" />
                  <Arrow $d="d" />
                </GalleryArrows>
                <Style $c="#9c6500" $bg="#ffeb9c">Neutral</Style>
                <Style $c="#fa7d00" $bg="#f2f2f2" $bd="1px solid #7f7f7f" $b>Calculation</Style>
                <Style $c="#fff" $bg="#a5a5a5" $bd="2px solid #3f3f3f" $b>Check Cell</Style>
              </Gallery>
            </GroupBody>
            <GroupLabel>Styles</GroupLabel>
          </Group>

          <Group $w={106}>
            <GroupBody $pl={4}>
              <BigBtn $w={33}><BigIcon><CellsIc kind="insert" /></BigIcon><BigLabel>{"Insert\n"}<Caret /></BigLabel></BigBtn>
              <BigBtn $w={33}><BigIcon><CellsIc kind="delete" /></BigIcon><BigLabel>{"Delete\n"}<Caret /></BigLabel></BigBtn>
              <BigBtn $w={35}><BigIcon><CellsIc kind="format" /></BigIcon><BigLabel>{"Format\n"}<Caret /></BigLabel></BigBtn>
            </GroupBody>
            <GroupLabel>Cells</GroupLabel>
          </Group>

          <Group $w={134}>
            <GroupBody $pl={6}>
              <SmallCol $w={56}>
                <SmallRow><SumSign>Σ</SumSign> AutoSum <Caret /></SmallRow>
                <SmallRow><FillDown /> Fill <Caret /></SmallRow>
                <SmallRow><Eraser /> Clear <Caret /></SmallRow>
              </SmallCol>
              <BigBtn $w={34}><BigIcon><SortIc /></BigIcon><BigLabel>{"Sort &\nFilter "}<Caret /></BigLabel></BigBtn>
              <BigBtn $w={37}><BigIcon><Binoc /></BigIcon><BigLabel>{"Find &\nSelect "}<Caret /></BigLabel></BigBtn>
            </GroupBody>
            <GroupLabel>Editing</GroupLabel>
          </Group>
        </Ribbon>

        <FormulaWrap>
          <NameBox>R16 <Caret $m={1} /></NameBox>
          <FxZone><FxCurve />fx</FxZone>
          <FormulaInput>{"for dwh to understand which  record is valid and which has expired"}</FormulaInput>
          <FormulaEnd><Arrow $d="d" $flush /></FormulaEnd>
        </FormulaWrap>

        <SheetRow>
          <Grid>
            <Corner />
            {COLS.map((c, i) => (
              <ColHead key={c} $i={i} $on={c === "R"}>{c}</ColHead>
            ))}
            {ROWS.map((r, i) => (
              <RowHead key={r} $i={i} $on={r === 16} $tall={r === 19}>{r}</RowHead>
            ))}
            {ROWS.map((r, i) =>
              COLS.map((c, j) => <GridLine key={`${c}${r}`} $c={j + 2} $r={i + 2} />)
            )}
            {ORDERED.map((c, i) => (
              <Cell
                key={i}
                {...place(c.at)}
                $fill={c.fill}
                $a={c.a}
                $v={c.v}
                $box={c.box}
                $head={c.head}
                $bold={c.bold}
                $under={c.under}
              >
                {c.text}
              </Cell>
            ))}
            <Selected {...place("R16")}>
              {"for dwh to understand which  record is valid and which has expired"}
              <Pointer width="11" height="11" viewBox="0 0 11 11">
                <path d="M4 0.500h3v3.500h3.500v3H7v3.500H4V7H0.500V4H4z" fill="#fff" stroke="#222" />
              </Pointer>
            </Selected>
          </Grid>
          <VScroll>
            <SplitBox />
            <Arrow $d="u" />
            <ScrollThumb><Grip /></ScrollThumb>
            <Arrow $d="d" />
          </VScroll>
        </SheetRow>

        <TabsRow>
          <SheetNav>
            <Arrow $d="l" />
            <Arrow $d="l" />
            <Arrow $d="r" />
            <Arrow $d="r" />
          </SheetNav>
          <SheetTab $on $w={46}>Sheet1</SheetTab>
          <SheetTab $w={46}>Sheet2</SheetTab>
          <SheetTab $w={46}>Sheet3</SheetTab>
          <SheetTab $w={46}>Sheet4</SheetTab>
          <SheetTab $w={26}>
            <svg width="13" height="11" viewBox="0 0 13 11">
              <rect x="3" y="2" width="9" height="8" fill="#f3f6fa" stroke="#667" />
              <circle cx="3" cy="2.500" r="2" fill="#e9b422" />
            </svg>
          </SheetTab>
          <SplitH $ml={497} />
          <ArrowSlot $ml={6}><Arrow $d="l" /></ArrowSlot>
          <HThumb $ml={133}><Grip /></HThumb>
          <ArrowSlot $ml={3}><Arrow $d="r" /></ArrowSlot>
          <SplitH $ml={4} />
        </TabsRow>

        <StatusBar>
          <Ready>Ready</Ready>
          <StatusRight>
            <ViewBtn $on><ViewIc kind="n" /></ViewBtn>
            <ViewBtn><ViewIc kind="p" /></ViewBtn>
            <ViewBtn><ViewIc kind="b" /></ViewBtn>
            <ZoomPct>100%</ZoomPct>
            <ZoomDot>−</ZoomDot>
            <ZoomTrack><ZoomKnob /></ZoomTrack>
            <ZoomDot>+</ZoomDot>
          </StatusRight>
        </StatusBar>

        <Taskbar>
          <TaskLeft><Widgets /></TaskLeft>
          <TaskSlot><Win11 /></TaskSlot>
          <TaskSlot><Search size={22} color="#e8eef4" /></TaskSlot>
          <TaskSlot><TaskView /></TaskSlot>
          <TaskSlot><Chat /></TaskSlot>
          <TaskSlot $run><Folder /></TaskSlot>
          <TaskSlot $run><Edge /></TaskSlot>
          <TaskSlot><Mail /></TaskSlot>
          <TaskSlot><Opera /></TaskSlot>
          <TaskSlot $run><Tor /></TaskSlot>
          <TaskSlot $run><Chrome /></TaskSlot>
          <TaskSlot $run><Yellow /></TaskSlot>
          <TaskSlot $run><GreenApp /></TaskSlot>
          <TaskSlot $run><Disc /></TaskSlot>
          <TaskSlot $run><Snip /></TaskSlot>
          <TaskSlot $run><Rar /></TaskSlot>
          <TaskSlot $run><Notepad /></TaskSlot>
          <TaskSlot $run><Word /></TaskSlot>
          <TaskSlot $run><ZoomApp /></TaskSlot>
          <TaskSlot $run $active><ExcelApp /></TaskSlot>
          <Tray>
            <TrayIcon $mr={8}><ChevronUp size={15} /></TrayIcon>
            <Mic size={16} color="#cfe0f2" />
            <Lang>ENG<br />IN</Lang>
            <TrayIcon $mr={8}><Wifi size={14} /></TrayIcon>
            <TrayIcon $mr={12}><Volume2 size={14} /></TrayIcon>
            <Battery />
            <Clock>20:15<br />11-05-2022</Clock>
          </Tray>
        </Taskbar>
      </Window>
    </>
  );
}
